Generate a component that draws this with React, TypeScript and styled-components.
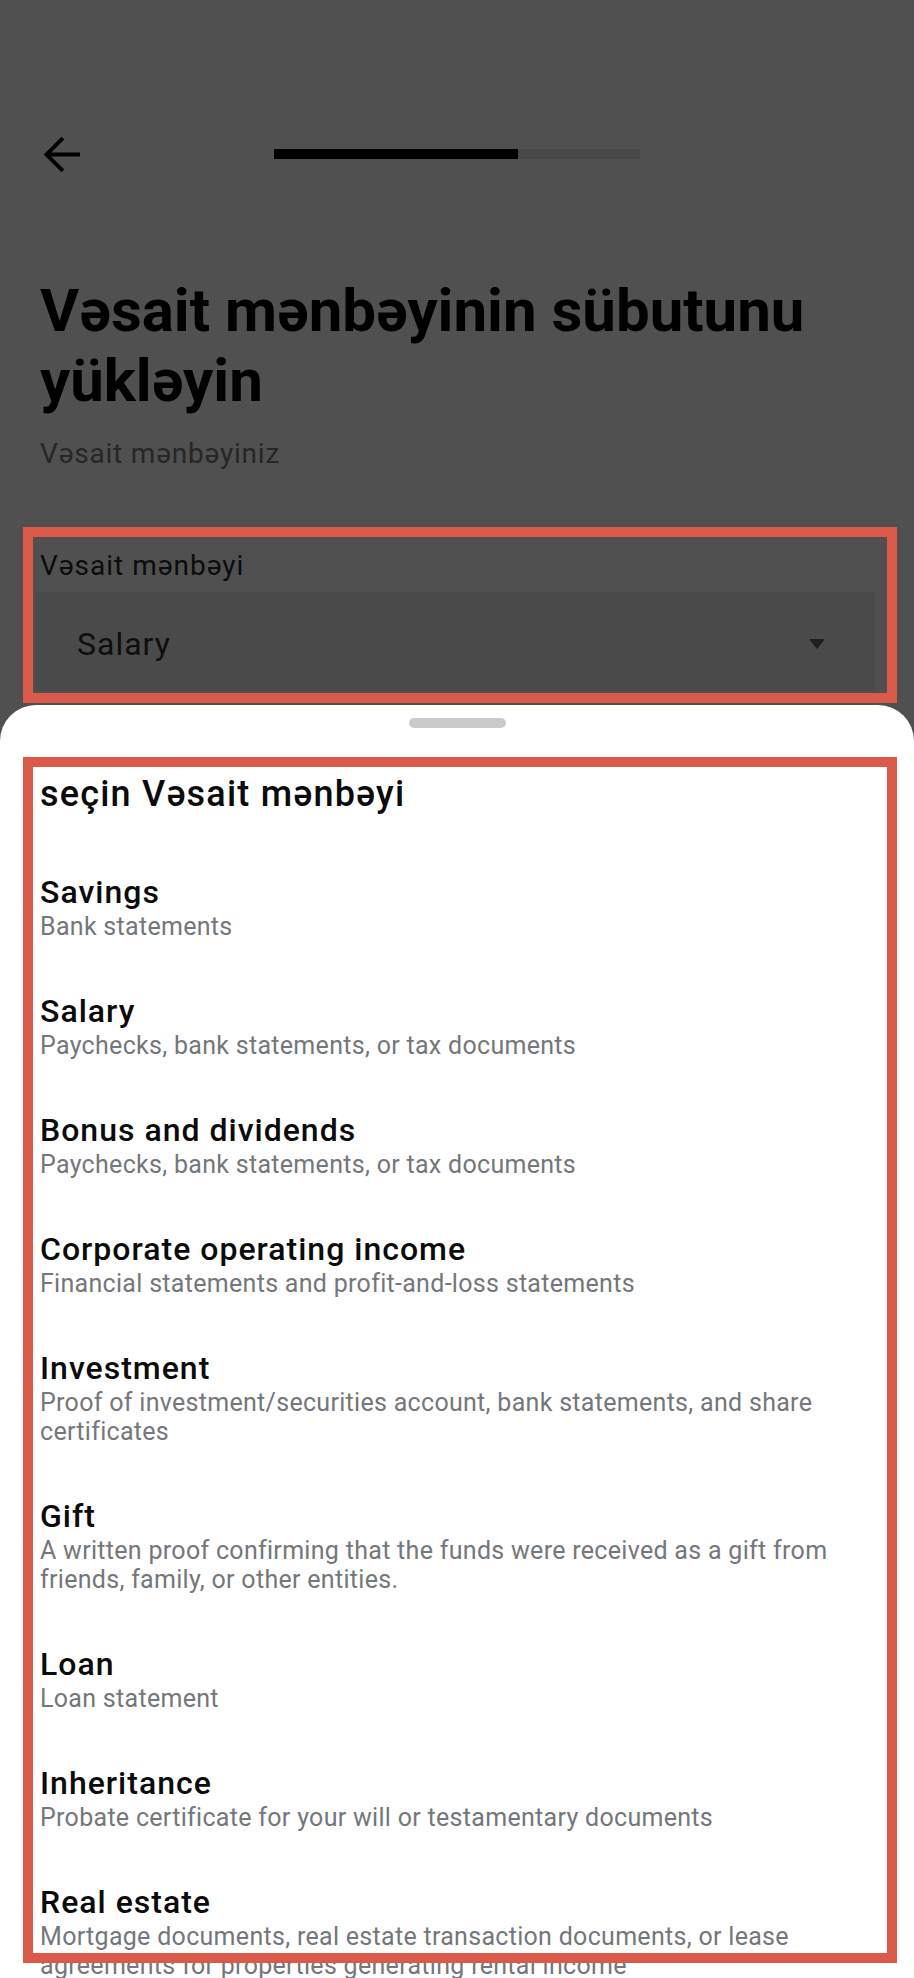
import React from "react";
import styled, { createGlobalStyle } from "styled-components";

const GlobalStyle = createGlobalStyle`
  html, body {
    margin: 0;
    padding: 0;
    background: #505050;
  }
  body {
    font-family: Roboto, "Noto Sans", "Liberation Sans", sans-serif;
    -webkit-font-smoothing: antialiased;
  }
  * {
    box-sizing: border-box;
  }
`;

const Screen = styled.div`
  position: relative;
  width: 914px;
  height: 1978px;
  overflow: hidden;
  background: #505050;
  display: flex;
  flex-direction: column;
`;

const Page = styled.div`
  height: 705px;
  flex-shrink: 0;
  padding: 124px 40px 0;
`;

const Header = styled.div`
  display: grid;
  grid-template-columns: 1fr auto 1fr;
  align-items: center;
  height: 60px;
`;

const BackButton = styled.button`
  width: 37px;
  height: 37px;
  margin-left: 3px;
  padding: 0;
  border: 0;
  background: none;
  display: flex;
  color: #000;
`;

const Progress = styled.div`
  width: 366px;
  height: 10px;
  background: #484848;
`;

const ProgressFill = styled.div`
  height: 100%;
  background: #000;
`;

const Title = styled.h1`
  margin: 92px 0 0;
  font-size: 60px;
  line-height: 70px;
  font-weight: 700;
  color: #000;
`;

const Subtitle = styled.p`
  margin: 21px 0 0;
  font-size: 28px;
  line-height: 34px;
  letter-spacing: 0.8px;
  color: #262626;
`;

const Field = styled.div`
  margin-top: 79px;
`;

const FieldLabel = styled.div`
  font-size: 28px;
  line-height: 32px;
  letter-spacing: 1px;
  color: #0c0c0c;
`;

const Select = styled.div`
  margin: 10px 0 0 -5px;
  width: calc(100% + 6px);
  height: 99px;
  padding: 5px 50px 0 42px;
  display: flex;
  align-items: center;
  justify-content: space-between;
  background: #4a4a4a;
`;

const SelectValue = styled.span`
  font-size: 32px;
  line-height: 38px;
  letter-spacing: 1px;
  color: #0e0e0e;
`;

const Sheet = styled.div`
  flex: 1;
  background: #fff;
  border-radius: 36px 36px 0 0;
  padding: 13px 40px 0;
`;

const Handle = styled.div`
  width: 97px;
  height: 10px;
  margin: 0 auto;
  border-radius: 5px;
  background: #c9cacc;
`;

const SheetTitle = styled.h2`
  margin: 46px 0 0;
  font-size: 36px;
  line-height: 40px;
  font-weight: 500;
  letter-spacing: 1.2px;
  color: #0b0b0b;
`;

const OptionList = styled.ul`
  list-style: none;
  margin: 60px 0 0;
  padding: 0;
  display: flex;
  flex-direction: column;
  gap: 52px;
`;

const Option = styled.li`
  display: flex;
  flex-direction: column;
  gap: 2px;
`;

const OptionTitle = styled.div`
  font-size: 32px;
  line-height: 36px;
  font-weight: 500;
  letter-spacing: 1px;
  color: #0b0b0b;
`;

const OptionDesc = styled.div`
  font-size: 25px;
  line-height: 29px;
  letter-spacing: 0.3px;
  color: #74777b;
`;

const Highlight = styled.div<{ $top: number; $height: number }>`
  position: absolute;
  left: 23px;
  width: 874px;
  top: ${(p) => p.$top}px;
  height: ${(p) => p.$height}px;
  border: 10px solid #dc5a49;
  pointer-events: none;
`;

const sources = [
  { title: "Savings", desc: "Bank statements" },
  { title: "Salary", desc: "Paychecks, bank statements, or tax documents" },
  { title: "Bonus and dividends", desc: "Paychecks, bank statements, or tax documents" },
  { title: "Corporate operating income", desc: "Financial statements and profit-and-loss statements" },
  {
    title: "Investment",
    desc: "Proof of investment/securities account, bank statements, and share certificates",
  },
  {
    title: "Gift",
    desc: "A written proof confirming that the funds were received as a gift from friends, family, or other entities.",
  },
  { title: "Loan", desc: "Loan statement" },
  { title: "Inheritance", desc: "Probate certificate for your will or testamentary documents" },
  {
    title: "Real estate",
    desc: "Mortgage documents, real estate transaction documents, or lease agreements for properties generating rental income",
  },
];

const BackArrow = () => (
  <svg width="37" height="37" viewBox="4 4 16 16" fill="currentColor">
    <path d="M20 11.1H7.6l5.6-5.6L12 4.3 4.3 12l7.7 7.7 1.2-1.2-5.6-5.6H20z" />
  </svg>
);

const Caret = () => (
  <svg width="16" height="10" viewBox="0 0 16 10">
    <path d="M1 0.5h14L8 9.5z" fill="#1f1f1f" stroke="#1f1f1f" strokeLinejoin="round" />
  </svg>
);

export default function App() {
  const progress = 2 / 3;
  return (
    <>
      <GlobalStyle />
      <Screen>
        <Page>
          <Header>
            <BackButton aria-label="Geri">
              <BackArrow />
            </BackButton>
            <Progress>
              <ProgressFill style={{ width: `${progress * 100}%` }} />
            </Progress>
            <span />
          </Header>
          <Title>Vəsait mənbəyinin sübutunu yükləyin</Title>
          <Subtitle>Vəsait mənbəyiniz</Subtitle>
          <Field>
            <FieldLabel>Vəsait mənbəyi</FieldLabel>
            <Select>
              <SelectValue>Salary</SelectValue>
              <Caret />
            </Select>
          </Field>
        </Page>
        <Sheet>
          <Handle />
          <SheetTitle>seçin Vəsait mənbəyi</SheetTitle>
          <OptionList>
            {sources.map((s) => (
              <Option key={s.title}>
                <OptionTitle>{s.title}</OptionTitle>
                <OptionDesc>{s.desc}</OptionDesc>
              </Option>
            ))}
          </OptionList>
        </Sheet>
        <Highlight $top={527} $height={176} />
        <Highlight $top={757} $height={1206} />
      </Screen>
    </>
  );
}
